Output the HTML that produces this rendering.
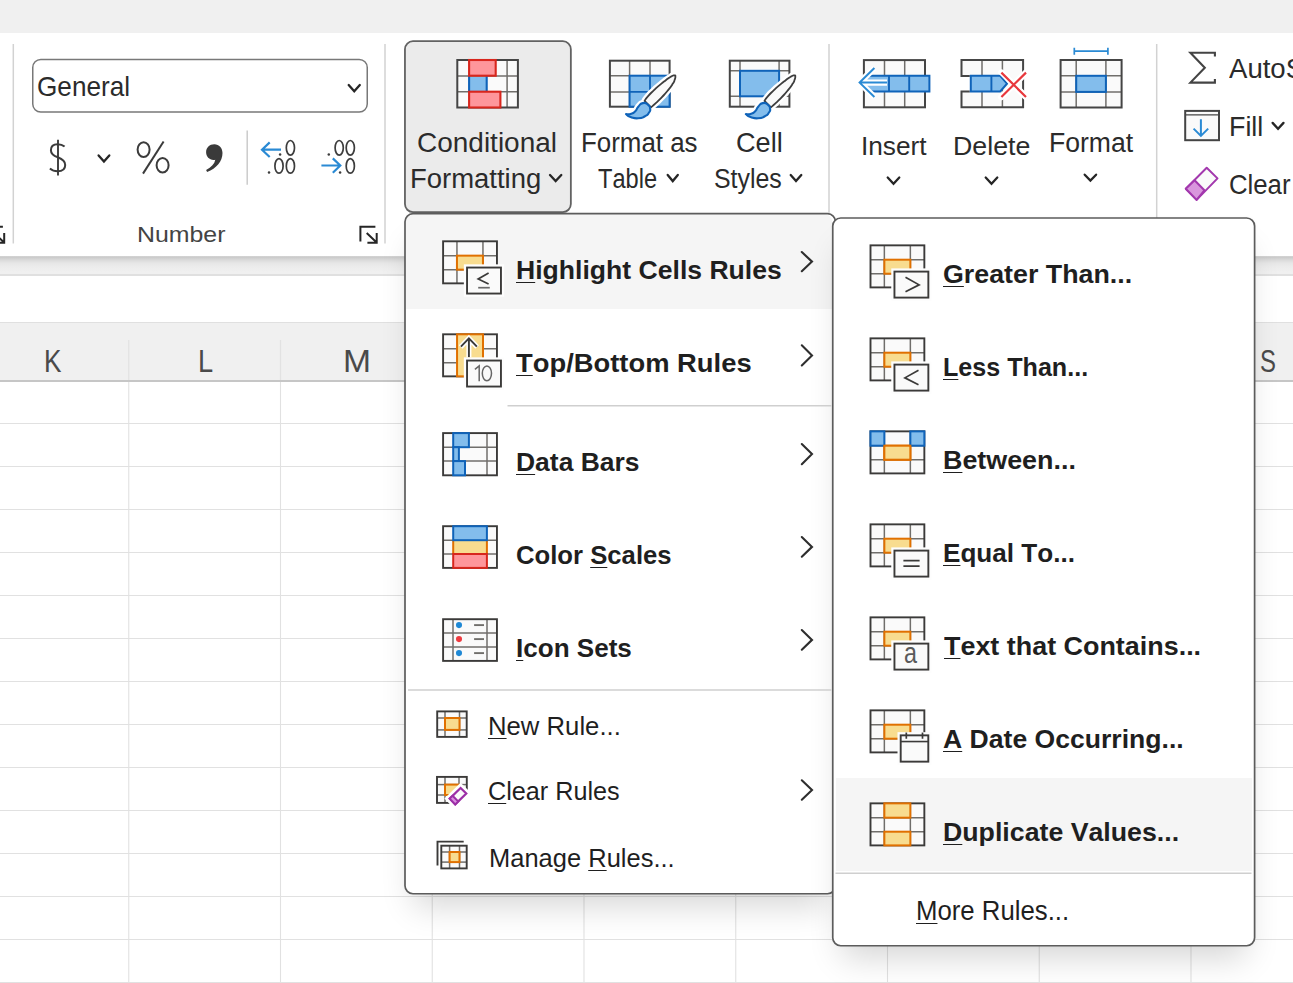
<!DOCTYPE html>
<html><head><meta charset="utf-8"><title>Excel - Conditional Formatting</title>
<style>
html,body{margin:0;padding:0;background:#fff;}
body{width:1293px;height:983px;overflow:hidden;position:relative;font-family:"Liberation Sans",sans-serif;}
#root{position:absolute;left:0;top:0;width:1293px;height:983px;overflow:hidden;background:#fff;}
.t{position:absolute;white-space:nowrap;line-height:1;transform-origin:0 0;font-kerning:none;font-family:"Liberation Sans",sans-serif;}
.t u{text-decoration:underline;text-decoration-thickness:1.3px;text-underline-offset:3px;text-decoration-skip-ink:none;}
.abs{position:absolute;}
svg.ov{position:absolute;left:0;top:0;width:1293px;height:983px;overflow:visible;}
.menu{position:absolute;background:#fff;border-radius:8px;box-shadow:0 21px 31px -9px rgba(0,0,0,0.165),0 0 5px rgba(0,0,0,0.03);}
</style></head><body><div id="root">
<div class="abs" style="left:0;top:0;width:1293px;height:32.5px;background:#f0f0f0"></div>
<div class="abs" style="left:0;top:256px;width:1293px;height:19px;background:linear-gradient(#d4d4d4 0px,#cccccc 1.5px,#dadada 4px,#e6e6e6 7px,#ececec 11px,#f0f0f0 16px)"></div>
<div class="abs" style="left:0;top:274.2px;width:1293px;height:1.7px;background:#e0e0e0"></div>
<div class="abs" style="left:0;top:322px;width:1293px;height:59px;background:#f0f0f0;border-top:1.8px solid #e0e0e0;box-sizing:border-box"></div>
<svg class="ov" viewBox="0 0 1293 983"><line x1="128.75" y1="340.00" x2="128.75" y2="380.50" stroke="#e2e2e2" stroke-width="1.2" /><line x1="128.75" y1="381.00" x2="128.75" y2="983.00" stroke="#e1e1e1" stroke-width="1.1" /><line x1="280.50" y1="340.00" x2="280.50" y2="380.50" stroke="#e2e2e2" stroke-width="1.2" /><line x1="280.50" y1="381.00" x2="280.50" y2="983.00" stroke="#e1e1e1" stroke-width="1.1" /><line x1="432.25" y1="340.00" x2="432.25" y2="380.50" stroke="#e2e2e2" stroke-width="1.2" /><line x1="432.25" y1="381.00" x2="432.25" y2="983.00" stroke="#e1e1e1" stroke-width="1.1" /><line x1="584.00" y1="340.00" x2="584.00" y2="380.50" stroke="#e2e2e2" stroke-width="1.2" /><line x1="584.00" y1="381.00" x2="584.00" y2="983.00" stroke="#e1e1e1" stroke-width="1.1" /><line x1="735.75" y1="340.00" x2="735.75" y2="380.50" stroke="#e2e2e2" stroke-width="1.2" /><line x1="735.75" y1="381.00" x2="735.75" y2="983.00" stroke="#e1e1e1" stroke-width="1.1" /><line x1="887.50" y1="340.00" x2="887.50" y2="380.50" stroke="#e2e2e2" stroke-width="1.2" /><line x1="887.50" y1="381.00" x2="887.50" y2="983.00" stroke="#e1e1e1" stroke-width="1.1" /><line x1="1039.25" y1="340.00" x2="1039.25" y2="380.50" stroke="#e2e2e2" stroke-width="1.2" /><line x1="1039.25" y1="381.00" x2="1039.25" y2="983.00" stroke="#e1e1e1" stroke-width="1.1" /><line x1="1191.00" y1="340.00" x2="1191.00" y2="380.50" stroke="#e2e2e2" stroke-width="1.2" /><line x1="1191.00" y1="381.00" x2="1191.00" y2="983.00" stroke="#e1e1e1" stroke-width="1.1" /><line x1="0.00" y1="423.50" x2="1293.00" y2="423.50" stroke="#e1e1e1" stroke-width="1.1" /><line x1="0.00" y1="466.50" x2="1293.00" y2="466.50" stroke="#e1e1e1" stroke-width="1.1" /><line x1="0.00" y1="509.50" x2="1293.00" y2="509.50" stroke="#e1e1e1" stroke-width="1.1" /><line x1="0.00" y1="552.50" x2="1293.00" y2="552.50" stroke="#e1e1e1" stroke-width="1.1" /><line x1="0.00" y1="595.50" x2="1293.00" y2="595.50" stroke="#e1e1e1" stroke-width="1.1" /><line x1="0.00" y1="638.50" x2="1293.00" y2="638.50" stroke="#e1e1e1" stroke-width="1.1" /><line x1="0.00" y1="681.50" x2="1293.00" y2="681.50" stroke="#e1e1e1" stroke-width="1.1" /><line x1="0.00" y1="724.50" x2="1293.00" y2="724.50" stroke="#e1e1e1" stroke-width="1.1" /><line x1="0.00" y1="767.50" x2="1293.00" y2="767.50" stroke="#e1e1e1" stroke-width="1.1" /><line x1="0.00" y1="810.50" x2="1293.00" y2="810.50" stroke="#e1e1e1" stroke-width="1.1" /><line x1="0.00" y1="853.50" x2="1293.00" y2="853.50" stroke="#e1e1e1" stroke-width="1.1" /><line x1="0.00" y1="896.50" x2="1293.00" y2="896.50" stroke="#e1e1e1" stroke-width="1.1" /><line x1="0.00" y1="939.50" x2="1293.00" y2="939.50" stroke="#e1e1e1" stroke-width="1.1" /><line x1="0.00" y1="982.50" x2="1293.00" y2="982.50" stroke="#e1e1e1" stroke-width="1.1" /><line x1="0.00" y1="381.00" x2="1293.00" y2="381.00" stroke="#c6c6c6" stroke-width="1.8" /><line x1="13.30" y1="44.00" x2="13.30" y2="243.50" stroke="#d2d2d2" stroke-width="1.5" /><line x1="385.00" y1="44.00" x2="385.00" y2="243.50" stroke="#d2d2d2" stroke-width="1.5" /><line x1="829.00" y1="44.00" x2="829.00" y2="243.50" stroke="#d2d2d2" stroke-width="1.5" /><line x1="1156.70" y1="44.00" x2="1156.70" y2="243.50" stroke="#d2d2d2" stroke-width="1.5" /><line x1="247.20" y1="130.50" x2="247.20" y2="184.70" stroke="#c8c8c8" stroke-width="1.4" /><rect x="32.75" y="59.5" width="334.5" height="52.5" rx="8" ry="8" fill="#fff" stroke="#787878" stroke-width="1.5"/><path d="M348.70 85.00 L354.25 91.30 L359.80 85.00" fill="none" stroke="#262626" stroke-width="2.3" stroke-linecap="round" stroke-linejoin="miter"/><path d="M98.60 155.40 L103.95 161.50 L109.30 155.40" fill="none" stroke="#262626" stroke-width="2.3" stroke-linecap="round" stroke-linejoin="miter"/><path d="M58 139.8 V175.6" fill="none" stroke="#3b3b3b" stroke-width="1.9"/><path d="M64.6 146.6 C62.6 144.9 60.2 144.2 57.6 144.2 C53.4 144.2 50.9 146.6 50.9 150.2 C50.9 154.2 53.8 155.8 57.8 157.3 C62.3 159 65.2 160.8 65.2 165 C65.2 169 62.2 171.3 57.6 171.3 C54.6 171.3 51.9 170.3 49.9 168.5" fill="none" stroke="#3b3b3b" stroke-width="2.0" stroke-linecap="butt"/><ellipse cx="143.6" cy="149.6" rx="6.0" ry="7.3" fill="none" stroke="#3b3b3b" stroke-width="2.0"/><ellipse cx="162.6" cy="165.3" rx="6.0" ry="7.3" fill="none" stroke="#3b3b3b" stroke-width="2.0"/><path d="M163.6 141.5 L143 173.6" fill="none" stroke="#3b3b3b" stroke-width="2.0"/><path d="M214.3 144.3 c4.8 0 8.2 3.5 8.2 8.8 c0 8.4 -6 15.4 -15.4 19 l-1 -2.2 c5.4 -2.8 8.4 -6.2 9.2 -10.2 c-0.6 0.15 -1.2 0.2 -1.8 0.2 c-4.3 0 -7.4 -3.2 -7.4 -7.6 c0 -4.5 3.4 -8 8.2 -8z" fill="#3a3a3a"/><circle cx="280.1" cy="154.4" r="1.25" fill="#3d3d3d"/><ellipse cx="290.4" cy="147.8" rx="4.1" ry="7.3" fill="none" stroke="#3d3d3d" stroke-width="1.7"/><circle cx="269" cy="172.4" r="1.25" fill="#3d3d3d"/><ellipse cx="279" cy="165.9" rx="4.1" ry="7.3" fill="none" stroke="#3d3d3d" stroke-width="1.7"/><ellipse cx="290.4" cy="165.9" rx="4.1" ry="7.3" fill="none" stroke="#3d3d3d" stroke-width="1.7"/><circle cx="328.8" cy="154.4" r="1.25" fill="#3d3d3d"/><ellipse cx="339.2" cy="147.8" rx="4.1" ry="7.3" fill="none" stroke="#3d3d3d" stroke-width="1.7"/><ellipse cx="350.3" cy="147.8" rx="4.1" ry="7.3" fill="none" stroke="#3d3d3d" stroke-width="1.7"/><circle cx="340.1" cy="172.4" r="1.25" fill="#3d3d3d"/><ellipse cx="350.3" cy="165.9" rx="4.1" ry="7.3" fill="none" stroke="#3d3d3d" stroke-width="1.7"/><path d="M262 149.7 H281 M269.7 142.4 L262 149.7 L269.7 157" fill="none" stroke="#2a8ad4" stroke-width="2.2" stroke-linecap="butt" stroke-linejoin="miter"/><path d="M321.4 165.5 H340 M332.8 158.4 L340.3 165.5 L332.8 172.8" fill="none" stroke="#2a8ad4" stroke-width="2.2" stroke-linecap="butt" stroke-linejoin="miter"/><path d="M360.4 241.4 V226.8 H375.4" fill="none" stroke="#262626" stroke-width="2"/><path d="M366.7 233.10000000000002 L376.4 242.3 M376.7 233.10000000000002 V242.8 H367.4" fill="none" stroke="#262626" stroke-width="2"/><path d="M-12.1 241.4 V226.8 H2.9000000000000004" fill="none" stroke="#262626" stroke-width="2"/><path d="M-5.8 233.10000000000002 L3.9000000000000004 242.3 M4.200000000000001 233.10000000000002 V242.8 H-5.1" fill="none" stroke="#262626" stroke-width="2"/><rect x="404.95" y="41.2" width="165.9" height="170.9" rx="8" ry="8" fill="#ebebeb" stroke="#626262" stroke-width="1.8"/><rect x="457.30" y="60.00" width="60.60" height="47.50" fill="#fafafa"/><line x1="507.10" y1="60.00" x2="507.10" y2="107.50" stroke="#706e6b" stroke-width="1.5"/><line x1="457.30" y1="75.90" x2="517.90" y2="75.90" stroke="#706e6b" stroke-width="1.5"/><line x1="457.30" y1="91.80" x2="517.90" y2="91.80" stroke="#706e6b" stroke-width="1.5"/><rect x="457.30" y="60.00" width="60.60" height="47.50" fill="none" stroke="#454545" stroke-width="2.0"/><rect x="469.10" y="77.00" width="17.60" height="14.00" fill="#83bdec" /><line x1="469.10" y1="76.00" x2="469.10" y2="92.00" stroke="#0f63b9" stroke-width="2.1" /><line x1="486.70" y1="76.00" x2="486.70" y2="92.00" stroke="#0f63b9" stroke-width="2.1" /><rect x="469.10" y="60.00" width="26.60" height="15.70" fill="#fe969b" stroke="#d8261d" stroke-width="2.1" /><rect x="469.10" y="91.70" width="31.30" height="15.80" fill="#fe969b" stroke="#d8261d" stroke-width="2.1" /><rect x="609.90" y="60.70" width="59.70" height="46.00" fill="#fafafa"/><line x1="629.60" y1="60.70" x2="629.60" y2="106.70" stroke="#706e6b" stroke-width="1.5"/><line x1="650.00" y1="60.70" x2="650.00" y2="106.70" stroke="#706e6b" stroke-width="1.5"/><line x1="609.90" y1="75.70" x2="669.60" y2="75.70" stroke="#706e6b" stroke-width="1.5"/><line x1="609.90" y1="91.90" x2="669.60" y2="91.90" stroke="#706e6b" stroke-width="1.5"/><rect x="609.90" y="60.70" width="59.70" height="46.00" fill="none" stroke="#454545" stroke-width="2.0"/><rect x="629.60" y="75.70" width="40.00" height="31.00" fill="#83bdec" stroke="#0f63b9" stroke-width="2.0" /><line x1="650.00" y1="75.70" x2="650.00" y2="106.70" stroke="#0f63b9" stroke-width="1.9" /><line x1="629.60" y1="91.90" x2="669.60" y2="91.90" stroke="#0f63b9" stroke-width="1.9" /><path d="M644.60 100.80 C645.77 99.23 644.97 99.63 648.10 96.10 C651.23 92.57 650.07 93.93 654.00 90.20 C657.93 86.47 655.97 88.23 659.90 84.90 C663.83 81.57 662.10 82.97 665.80 80.20 C669.50 77.43 668.17 78.20 671.00 76.60 C673.83 75.00 672.83 75.40 674.30 75.40 C675.77 75.40 675.30 75.07 675.40 76.60 C675.50 78.13 675.43 77.67 674.60 80.00 C673.77 82.33 675.23 80.00 672.90 83.60 C670.57 87.20 671.33 86.23 667.60 90.80 C663.87 95.37 665.63 93.17 661.70 97.30 C657.77 101.43 659.37 99.87 655.80 103.20 C652.23 106.53 652.60 105.93 651.00 107.30z" fill="#fff" stroke="#fff" stroke-width="6.5" stroke-linejoin="round"/><path d="M626.00 114.10 C627.53 114.03 627.50 114.87 630.60 113.90 C633.70 112.93 632.73 113.60 635.30 111.20 C637.87 108.80 635.80 109.40 638.30 106.70 C640.80 104.00 639.60 103.80 642.80 103.10 C646.00 102.40 645.47 102.80 647.90 104.60 C650.33 106.40 649.73 105.87 650.10 108.50 C650.47 111.13 650.70 109.93 649.00 112.50 C647.30 115.07 648.63 114.27 645.00 116.20 C641.37 118.13 642.90 118.07 638.10 118.30 C633.30 118.53 634.63 118.30 630.60 116.90 C626.57 115.50 627.53 115.03 626.00 114.10z" fill="#fff" stroke="#fff" stroke-width="6.5" stroke-linejoin="round"/><path d="M644.60 100.80 C645.77 99.23 644.97 99.63 648.10 96.10 C651.23 92.57 650.07 93.93 654.00 90.20 C657.93 86.47 655.97 88.23 659.90 84.90 C663.83 81.57 662.10 82.97 665.80 80.20 C669.50 77.43 668.17 78.20 671.00 76.60 C673.83 75.00 672.83 75.40 674.30 75.40 C675.77 75.40 675.30 75.07 675.40 76.60 C675.50 78.13 675.43 77.67 674.60 80.00 C673.77 82.33 675.23 80.00 672.90 83.60 C670.57 87.20 671.33 86.23 667.60 90.80 C663.87 95.37 665.63 93.17 661.70 97.30 C657.77 101.43 659.37 99.87 655.80 103.20 C652.23 106.53 652.60 105.93 651.00 107.30z" fill="#fafafa" stroke="#3d3d3d" stroke-width="1.8" stroke-linejoin="round"/><path d="M626.00 114.10 C627.53 114.03 627.50 114.87 630.60 113.90 C633.70 112.93 632.73 113.60 635.30 111.20 C637.87 108.80 635.80 109.40 638.30 106.70 C640.80 104.00 639.60 103.80 642.80 103.10 C646.00 102.40 645.47 102.80 647.90 104.60 C650.33 106.40 649.73 105.87 650.10 108.50 C650.47 111.13 650.70 109.93 649.00 112.50 C647.30 115.07 648.63 114.27 645.00 116.20 C641.37 118.13 642.90 118.07 638.10 118.30 C633.30 118.53 634.63 118.30 630.60 116.90 C626.57 115.50 627.53 115.03 626.00 114.10z" fill="#83bdec" stroke="#0f63b9" stroke-width="2.1" stroke-linejoin="round"/><rect x="729.80" y="60.70" width="59.60" height="46.00" fill="#fafafa"/><line x1="740.00" y1="60.70" x2="740.00" y2="106.70" stroke="#706e6b" stroke-width="1.5"/><line x1="779.10" y1="60.70" x2="779.10" y2="106.70" stroke="#706e6b" stroke-width="1.5"/><line x1="729.80" y1="70.80" x2="789.40" y2="70.80" stroke="#706e6b" stroke-width="1.5"/><line x1="729.80" y1="96.30" x2="789.40" y2="96.30" stroke="#706e6b" stroke-width="1.5"/><rect x="729.80" y="60.70" width="59.60" height="46.00" fill="none" stroke="#454545" stroke-width="2.0"/><rect x="740.00" y="70.80" width="39.10" height="25.50" fill="#83bdec" stroke="#0f63b9" stroke-width="2.0" /><path d="M764.50 100.80 C765.67 99.23 764.87 99.63 768.00 96.10 C771.13 92.57 769.97 93.93 773.90 90.20 C777.83 86.47 775.87 88.23 779.80 84.90 C783.73 81.57 782.00 82.97 785.70 80.20 C789.40 77.43 788.07 78.20 790.90 76.60 C793.73 75.00 792.73 75.40 794.20 75.40 C795.67 75.40 795.20 75.07 795.30 76.60 C795.40 78.13 795.33 77.67 794.50 80.00 C793.67 82.33 795.13 80.00 792.80 83.60 C790.47 87.20 791.23 86.23 787.50 90.80 C783.77 95.37 785.53 93.17 781.60 97.30 C777.67 101.43 779.27 99.87 775.70 103.20 C772.13 106.53 772.50 105.93 770.90 107.30z" fill="#fff" stroke="#fff" stroke-width="6.5" stroke-linejoin="round"/><path d="M745.90 114.10 C747.43 114.03 747.40 114.87 750.50 113.90 C753.60 112.93 752.63 113.60 755.20 111.20 C757.77 108.80 755.70 109.40 758.20 106.70 C760.70 104.00 759.50 103.80 762.70 103.10 C765.90 102.40 765.37 102.80 767.80 104.60 C770.23 106.40 769.63 105.87 770.00 108.50 C770.37 111.13 770.60 109.93 768.90 112.50 C767.20 115.07 768.53 114.27 764.90 116.20 C761.27 118.13 762.80 118.07 758.00 118.30 C753.20 118.53 754.53 118.30 750.50 116.90 C746.47 115.50 747.43 115.03 745.90 114.10z" fill="#fff" stroke="#fff" stroke-width="6.5" stroke-linejoin="round"/><path d="M764.50 100.80 C765.67 99.23 764.87 99.63 768.00 96.10 C771.13 92.57 769.97 93.93 773.90 90.20 C777.83 86.47 775.87 88.23 779.80 84.90 C783.73 81.57 782.00 82.97 785.70 80.20 C789.40 77.43 788.07 78.20 790.90 76.60 C793.73 75.00 792.73 75.40 794.20 75.40 C795.67 75.40 795.20 75.07 795.30 76.60 C795.40 78.13 795.33 77.67 794.50 80.00 C793.67 82.33 795.13 80.00 792.80 83.60 C790.47 87.20 791.23 86.23 787.50 90.80 C783.77 95.37 785.53 93.17 781.60 97.30 C777.67 101.43 779.27 99.87 775.70 103.20 C772.13 106.53 772.50 105.93 770.90 107.30z" fill="#fafafa" stroke="#3d3d3d" stroke-width="1.8" stroke-linejoin="round"/><path d="M745.90 114.10 C747.43 114.03 747.40 114.87 750.50 113.90 C753.60 112.93 752.63 113.60 755.20 111.20 C757.77 108.80 755.70 109.40 758.20 106.70 C760.70 104.00 759.50 103.80 762.70 103.10 C765.90 102.40 765.37 102.80 767.80 104.60 C770.23 106.40 769.63 105.87 770.00 108.50 C770.37 111.13 770.60 109.93 768.90 112.50 C767.20 115.07 768.53 114.27 764.90 116.20 C761.27 118.13 762.80 118.07 758.00 118.30 C753.20 118.53 754.53 118.30 750.50 116.90 C746.47 115.50 747.43 115.03 745.90 114.10z" fill="#83bdec" stroke="#0f63b9" stroke-width="2.1" stroke-linejoin="round"/><rect x="863.90" y="60.10" width="61.10" height="47.20" fill="#fafafa"/><line x1="884.50" y1="60.10" x2="884.50" y2="107.30" stroke="#706e6b" stroke-width="1.5"/><line x1="904.70" y1="60.10" x2="904.70" y2="107.30" stroke="#706e6b" stroke-width="1.5"/><rect x="863.90" y="60.10" width="61.10" height="47.20" fill="none" stroke="#454545" stroke-width="2.0"/><path d="M929.4 75.8 H866.4 L861 82.6 L866.4 91.5 H929.4z" fill="#83bdec" stroke="none"/><path d="M868 75.8 H929.4 V91.5 H868" fill="none" stroke="#0f63b9" stroke-width="2.0"/><line x1="889.00" y1="75.80" x2="889.00" y2="91.50" stroke="#0f63b9" stroke-width="1.9" /><line x1="909.20" y1="75.80" x2="909.20" y2="91.50" stroke="#0f63b9" stroke-width="1.9" /><path d="M874.2 68.2 L859.6 82.6 L874.2 96.8 M859.6 82.6 H887" fill="none" stroke="#fff" stroke-width="6.2" stroke-linecap="butt" stroke-linejoin="miter"/><path d="M874.4 68 L859.6 82.6 L874.4 97 M860.5 82.6 H887" fill="none" stroke="#2a8ad4" stroke-width="2.0" stroke-linecap="butt" stroke-linejoin="miter"/><rect x="961.50" y="60.10" width="61.60" height="47.20" fill="#fafafa" /><line x1="982.00" y1="60.10" x2="982.00" y2="107.30" stroke="#706e6b" stroke-width="1.5" /><line x1="1002.40" y1="60.10" x2="1002.40" y2="107.30" stroke="#706e6b" stroke-width="1.5" /><rect x="955.00" y="77.00" width="14.80" height="13.40" fill="#fff" /><path d="M969.8 76 H961.5 V60.1 H1023.1 V107.3 H961.5 V91.4 H969.8" fill="none" stroke="#454545" stroke-width="2.0"/><path d="M1001.4 72.6 L1026 97 M1026 72.6 L1001.4 97" fill="none" stroke="#fff" stroke-width="6.5" stroke-linecap="round"/><path d="M970.8 75.8 H1000.2 L1007 83.65 L1000.2 91.5 H970.8z" fill="#83bdec" stroke="#0f63b9" stroke-width="2.0" stroke-linejoin="miter"/><line x1="991.40" y1="75.80" x2="991.40" y2="91.50" stroke="#0f63b9" stroke-width="1.9" /><path d="M1009.5 80.6 L1026 97 M1026 72.6 L1001.4 97 M1001.4 72.6 L1009.5 80.6" fill="none" stroke="#fff" stroke-width="5.5" stroke-linecap="round"/><path d="M1001.4 72.6 L1026 97 M1026 72.6 L1001.4 97" fill="none" stroke="#e8383d" stroke-width="2.2" stroke-linecap="butt"/><rect x="1060.60" y="60.00" width="61.00" height="47.50" fill="#fafafa"/><line x1="1076.20" y1="60.00" x2="1076.20" y2="107.50" stroke="#706e6b" stroke-width="1.5"/><line x1="1105.90" y1="60.00" x2="1105.90" y2="107.50" stroke="#706e6b" stroke-width="1.5"/><line x1="1060.60" y1="75.80" x2="1121.60" y2="75.80" stroke="#706e6b" stroke-width="1.5"/><line x1="1060.60" y1="91.90" x2="1121.60" y2="91.90" stroke="#706e6b" stroke-width="1.5"/><rect x="1060.60" y="60.00" width="61.00" height="47.50" fill="none" stroke="#454545" stroke-width="2.0"/><rect x="1076.20" y="75.80" width="29.70" height="16.10" fill="#83bdec" stroke="#0f63b9" stroke-width="2.0" /><path d="M1073.7 51.2 H1108.5 M1074.3 47.8 V54.7 M1107.9 47.8 V54.7" fill="none" stroke="#2a8ad4" stroke-width="1.7"/><path d="M1214.9 56.6 V52.7 H1190.4 L1204.8 67.7 L1190.4 82.6 H1214.9 V78.9" fill="none" stroke="#444" stroke-width="2.1" stroke-linejoin="miter"/><rect x="1185.20" y="110.90" width="33.80" height="29.30" fill="#fafafa" stroke="#444" stroke-width="2.0" /><line x1="1185.20" y1="114.90" x2="1219.00" y2="114.90" stroke="#444" stroke-width="1.2" /><path d="M1200.9 119.3 V135.5 M1193.6 128.6 L1200.9 135.9 L1208.2 128.6" fill="none" stroke="#2a8ad4" stroke-width="2.0" stroke-linecap="butt" stroke-linejoin="miter"/><path d="M1206.7 167.8 L1217.5 178.4 L1196.6 199.9 L1185.8 188.7z" fill="#fafafa" stroke="#a338ae" stroke-width="2.0" stroke-linejoin="round"/><path d="M1194.6 180.3 L1204.4 190.3 L1196.6 199.9 L1185.8 188.7z" fill="#d996dd" stroke="#a338ae" stroke-width="2.0" stroke-linejoin="round"/><path d="M550.00 175.00 L555.65 181.10 L561.30 175.00" fill="none" stroke="#262626" stroke-width="2.3" stroke-linecap="round" stroke-linejoin="miter"/><path d="M667.70 175.00 L672.75 181.10 L677.80 175.00" fill="none" stroke="#262626" stroke-width="2.3" stroke-linecap="round" stroke-linejoin="miter"/><path d="M790.70 175.00 L796.00 181.10 L801.30 175.00" fill="none" stroke="#262626" stroke-width="2.3" stroke-linecap="round" stroke-linejoin="miter"/><path d="M887.70 177.50 L893.50 183.70 L899.30 177.50" fill="none" stroke="#262626" stroke-width="2.3" stroke-linecap="round" stroke-linejoin="miter"/><path d="M985.70 177.50 L991.50 183.70 L997.30 177.50" fill="none" stroke="#262626" stroke-width="2.3" stroke-linecap="round" stroke-linejoin="miter"/><path d="M1084.70 174.70 L1090.40 180.60 L1096.10 174.70" fill="none" stroke="#262626" stroke-width="2.3" stroke-linecap="round" stroke-linejoin="miter"/><path d="M1272.60 122.90 L1278.05 128.80 L1283.50 122.90" fill="none" stroke="#262626" stroke-width="2.3" stroke-linecap="round" stroke-linejoin="miter"/></svg>
<span class="t" style="left:36.68px;top:73.81px;font-size:26.89px;transform:scaleX(0.9728);color:#2b2b2b;">General</span>
<span class="t" style="left:136.96px;top:222.52px;font-size:22.97px;transform:scaleX(1.0829);color:#444;">Number</span>
<span class="t" style="left:417.33px;top:130.13px;font-size:26.74px;transform:scaleX(1.0466);color:#2b2b2b;">Conditional</span>
<span class="t" style="left:409.50px;top:165.63px;font-size:26.74px;transform:scaleX(1.0270);color:#2b2b2b;">Formatting</span>
<span class="t" style="left:581.38px;top:130.13px;font-size:26.74px;transform:scaleX(0.9683);color:#2b2b2b;">Format as</span>
<span class="t" style="left:597.97px;top:165.63px;font-size:26.74px;transform:scaleX(0.8831);color:#2b2b2b;">Table</span>
<span class="t" style="left:735.62px;top:130.13px;font-size:26.74px;transform:scaleX(1.0134);color:#2b2b2b;">Cell</span>
<span class="t" style="left:713.62px;top:165.63px;font-size:26.74px;transform:scaleX(0.9307);color:#2b2b2b;">Styles</span>
<span class="t" style="left:860.58px;top:133.27px;font-size:26.45px;transform:scaleX(0.9917);color:#2b2b2b;">Insert</span>
<span class="t" style="left:953.30px;top:133.27px;font-size:26.45px;transform:scaleX(1.0120);color:#2b2b2b;">Delete</span>
<span class="t" style="left:1049.02px;top:130.13px;font-size:26.74px;transform:scaleX(0.9938);color:#2b2b2b;">Format</span>
<span class="t" style="left:1229.35px;top:56.23px;font-size:26.74px;transform:scaleX(1.0308);color:#2b2b2b;">AutoSum</span>
<span class="t" style="left:1228.60px;top:113.93px;font-size:26.74px;transform:scaleX(1.0040);color:#2b2b2b;">Fill</span>
<span class="t" style="left:1228.89px;top:172.03px;font-size:26.74px;transform:scaleX(0.9628);color:#2b2b2b;">Clear</span>
<span class="t" style="left:43.61px;top:345.87px;font-size:31.25px;transform:scaleX(0.8366);color:#4a4a4a;">K</span>
<span class="t" style="left:197.77px;top:345.87px;font-size:31.25px;transform:scaleX(0.8709);color:#4a4a4a;">L</span>
<span class="t" style="left:342.74px;top:345.87px;font-size:31.25px;transform:scaleX(1.0763);color:#4a4a4a;">M</span>
<span class="t" style="left:1260.42px;top:345.87px;font-size:31.25px;transform:scaleX(0.7643);color:#4a4a4a;">S</span>
<div class="menu" style="left:405.00px;top:213.70px;width:430.50px;height:680.05px"></div>
<div class="abs" style="left:405.6px;top:214.3px;width:426.4px;height:95.2px;background:#f5f5f5;border-radius:7.5px 7.5px 0 0"></div>
<svg class="ov" viewBox="0 0 1293 983"><rect x="405.00" y="213.70" width="430.50" height="680.05" rx="8" ry="8" fill="none" stroke="#5c5c5c" stroke-width="1.7"/></svg>
<div class="menu" style="left:832.75px;top:218.00px;width:421.85px;height:727.75px"></div>
<div class="abs" style="left:835.5px;top:778px;width:416px;height:93.3px;background:#f5f5f5"></div>
<svg class="ov" viewBox="0 0 1293 983"><rect x="832.75" y="218.00" width="421.85" height="727.75" rx="8" ry="8" fill="none" stroke="#5c5c5c" stroke-width="1.7"/></svg>
<svg class="ov" viewBox="0 0 1293 983"><line x1="507.50" y1="405.75" x2="831.50" y2="405.75" stroke="#cfcfcf" stroke-width="1.5" /><line x1="408.00" y1="690.00" x2="831.50" y2="690.00" stroke="#cfcfcf" stroke-width="1.5" /><line x1="835.50" y1="873.25" x2="1251.50" y2="873.25" stroke="#cfcfcf" stroke-width="1.5" /><path d="M801.80 252.05 L812.00 261.62 L801.80 271.20" fill="none" stroke="#2e2e2e" stroke-width="2.1" stroke-linecap="round" stroke-linejoin="miter"/><path d="M801.80 345.30 L812.00 355.38 L801.80 365.45" fill="none" stroke="#2e2e2e" stroke-width="2.1" stroke-linecap="round" stroke-linejoin="miter"/><path d="M801.80 444.05 L812.00 454.12 L801.80 464.20" fill="none" stroke="#2e2e2e" stroke-width="2.1" stroke-linecap="round" stroke-linejoin="miter"/><path d="M801.80 537.05 L812.00 546.88 L801.80 556.70" fill="none" stroke="#2e2e2e" stroke-width="2.1" stroke-linecap="round" stroke-linejoin="miter"/><path d="M801.80 630.05 L812.00 639.88 L801.80 649.70" fill="none" stroke="#2e2e2e" stroke-width="2.1" stroke-linecap="round" stroke-linejoin="miter"/><path d="M801.80 780.30 L812.00 790.00 L801.80 799.70" fill="none" stroke="#2e2e2e" stroke-width="2.1" stroke-linecap="round" stroke-linejoin="miter"/><rect x="443.10" y="241.30" width="53.85" height="42.05" fill="#fafafa"/><line x1="456.95" y1="241.30" x2="456.95" y2="283.35" stroke="#706e6b" stroke-width="1.5"/><line x1="482.95" y1="241.30" x2="482.95" y2="283.35" stroke="#706e6b" stroke-width="1.5"/><line x1="443.10" y1="255.65" x2="496.95" y2="255.65" stroke="#706e6b" stroke-width="1.5"/><line x1="443.10" y1="269.65" x2="496.95" y2="269.65" stroke="#706e6b" stroke-width="1.5"/><rect x="443.10" y="241.30" width="53.85" height="42.05" fill="none" stroke="#3b3a39" stroke-width="1.9"/><rect x="456.95" y="255.65" width="26.00" height="14.00" fill="#f8dc8f" stroke="#e07000" stroke-width="2.0" /><rect x="467.05" y="267.55" width="33.90" height="26.00" fill="#fdfdfd" stroke="#fdfdfd" stroke-width="6.4" /><rect x="467.05" y="267.55" width="33.90" height="26.00" fill="#fafafa" stroke="#3b3a39" stroke-width="1.9" /><path d="M488.6 273 L478.2 278.9 L488.6 284" fill="none" stroke="#3b3a39" stroke-width="1.7" stroke-linejoin="miter"/><line x1="478.20" y1="287.70" x2="489.80" y2="287.70" stroke="#6a6a6a" stroke-width="1.7" /><rect x="443.10" y="334.30" width="53.85" height="42.05" fill="#fafafa"/><line x1="443.10" y1="348.65" x2="496.95" y2="348.65" stroke="#706e6b" stroke-width="1.5"/><line x1="443.10" y1="362.65" x2="496.95" y2="362.65" stroke="#706e6b" stroke-width="1.5"/><rect x="443.10" y="334.30" width="53.85" height="42.05" fill="none" stroke="#3b3a39" stroke-width="1.9"/><rect x="457.05" y="334.30" width="25.95" height="42.05" fill="#f8dc8f" stroke="#e07000" stroke-width="2.0" /><path d="M468.9 357.2 V338 M460.7 346.9 L468.9 338.3 L477.1 346.9" fill="none" stroke="#fff" stroke-width="5" stroke-linejoin="miter" stroke-linecap="butt"/><path d="M468.9 357.2 V338 M460.9 346.7 L468.9 338.3 L476.9 346.7" fill="none" stroke="#3b3a39" stroke-width="1.9" stroke-linejoin="miter"/><rect x="467.05" y="360.55" width="33.90" height="26.00" fill="#fdfdfd" stroke="#fdfdfd" stroke-width="6.4" /><rect x="467.05" y="360.55" width="33.90" height="26.00" fill="#fafafa" stroke="#3b3a39" stroke-width="1.9" /><path d="M474.9 369.3 L479.2 365.9 V381.3" fill="none" stroke="#666" stroke-width="1.5" stroke-linejoin="miter"/><ellipse cx="486.9" cy="373.3" rx="4.6" ry="7.4" fill="none" stroke="#666" stroke-width="1.5"/><rect x="443.10" y="433.10" width="53.85" height="42.20" fill="#fafafa"/><line x1="487.00" y1="433.10" x2="487.00" y2="475.30" stroke="#706e6b" stroke-width="1.5"/><line x1="443.10" y1="447.20" x2="496.95" y2="447.20" stroke="#706e6b" stroke-width="1.5"/><line x1="443.10" y1="461.10" x2="496.95" y2="461.10" stroke="#706e6b" stroke-width="1.5"/><rect x="443.10" y="433.10" width="53.85" height="42.20" fill="none" stroke="#3b3a39" stroke-width="1.9"/><rect x="453.20" y="433.10" width="15.70" height="14.10" fill="#83bdec" stroke="#0f63b9" stroke-width="2.0" /><rect x="453.20" y="447.20" width="5.70" height="13.90" fill="#83bdec" stroke="#0f63b9" stroke-width="2.0" /><rect x="453.20" y="461.10" width="11.80" height="14.20" fill="#83bdec" stroke="#0f63b9" stroke-width="2.0" /><rect x="443.10" y="526.20" width="53.85" height="41.70" fill="#fafafa"/><line x1="443.10" y1="540.20" x2="496.95" y2="540.20" stroke="#706e6b" stroke-width="1.5"/><line x1="443.10" y1="554.00" x2="496.95" y2="554.00" stroke="#706e6b" stroke-width="1.5"/><rect x="443.10" y="526.20" width="53.85" height="41.70" fill="none" stroke="#3b3a39" stroke-width="1.9"/><rect x="453.20" y="540.20" width="33.70" height="13.80" fill="#f8dc8f" /><line x1="453.20" y1="540.20" x2="453.20" y2="554.00" stroke="#e07000" stroke-width="2.0" /><line x1="486.90" y1="540.20" x2="486.90" y2="554.00" stroke="#e07000" stroke-width="2.0" /><rect x="453.20" y="526.20" width="33.70" height="14.00" fill="#83bdec" stroke="#0f63b9" stroke-width="2.0" /><rect x="453.20" y="554.00" width="33.70" height="13.90" fill="#fe969b" stroke="#d8261d" stroke-width="2.0" /><rect x="443.10" y="619.20" width="53.85" height="41.70" fill="#fafafa"/><line x1="453.00" y1="619.20" x2="453.00" y2="660.90" stroke="#706e6b" stroke-width="1.5"/><line x1="487.00" y1="619.20" x2="487.00" y2="660.90" stroke="#706e6b" stroke-width="1.5"/><line x1="443.10" y1="633.00" x2="496.95" y2="633.00" stroke="#706e6b" stroke-width="1.5"/><line x1="443.10" y1="646.90" x2="496.95" y2="646.90" stroke="#706e6b" stroke-width="1.5"/><rect x="443.10" y="619.20" width="53.85" height="41.70" fill="none" stroke="#3b3a39" stroke-width="1.9"/><circle cx="459" cy="625.10" r="3.05" fill="#1e88d5"/><line x1="474.10" y1="625.10" x2="484.00" y2="625.10" stroke="#706e6b" stroke-width="1.9" /><circle cx="459" cy="639.10" r="3.05" fill="#ee3a3f"/><line x1="474.10" y1="639.10" x2="484.00" y2="639.10" stroke="#706e6b" stroke-width="1.9" /><circle cx="459" cy="653.10" r="3.05" fill="#1e88d5"/><line x1="474.10" y1="653.10" x2="484.00" y2="653.10" stroke="#706e6b" stroke-width="1.9" /><rect x="437.20" y="711.40" width="29.50" height="25.50" fill="#fafafa"/><line x1="445.00" y1="711.40" x2="445.00" y2="736.90" stroke="#706e6b" stroke-width="1.5"/><line x1="459.50" y1="711.40" x2="459.50" y2="736.90" stroke="#706e6b" stroke-width="1.5"/><line x1="437.20" y1="718.00" x2="466.70" y2="718.00" stroke="#706e6b" stroke-width="1.5"/><line x1="437.20" y1="729.90" x2="466.70" y2="729.90" stroke="#706e6b" stroke-width="1.5"/><rect x="437.20" y="711.40" width="29.50" height="25.50" fill="none" stroke="#3b3a39" stroke-width="1.9"/><rect x="445.00" y="718.00" width="14.50" height="11.90" fill="#f8dc8f" stroke="#e07000" stroke-width="2.0" /><rect x="437.00" y="776.90" width="29.80" height="26.00" fill="#fafafa"/><line x1="445.00" y1="776.90" x2="445.00" y2="802.90" stroke="#706e6b" stroke-width="1.5"/><line x1="459.00" y1="776.90" x2="459.00" y2="802.90" stroke="#706e6b" stroke-width="1.5"/><line x1="437.00" y1="784.60" x2="466.80" y2="784.60" stroke="#706e6b" stroke-width="1.5"/><line x1="437.00" y1="795.00" x2="466.80" y2="795.00" stroke="#706e6b" stroke-width="1.5"/><rect x="437.00" y="776.90" width="29.80" height="26.00" fill="none" stroke="#3b3a39" stroke-width="1.9"/><rect x="445.00" y="784.60" width="14.00" height="10.40" fill="#f8dc8f" stroke="#e07000" stroke-width="2.0" /><path d="M469 795 V806 H456.5z" fill="#fff"/><path d="M460.6 788 L466.3 793.5 L455.2 804.4 L449.7 798.6z" fill="#fff" stroke="#fff" stroke-width="7.5" stroke-linejoin="miter"/><path d="M460.6 788 L466.3 793.5 L455.2 804.4 L449.7 798.6z" fill="#fafafa" stroke="#9c2fa6" stroke-width="2.2" stroke-linejoin="miter"/><path d="M452.6 795.8 L458.2 801.4 L455.2 804.4 L449.7 798.6z" fill="#d98fe0" stroke="#9c2fa6" stroke-width="2.0" stroke-linejoin="miter"/><path d="M437.5 865.4 V841.6 H463.7" fill="none" stroke="#3b3a39" stroke-width="1.9"/><rect x="441.30" y="845.70" width="25.40" height="22.70" fill="#fafafa"/><line x1="449.60" y1="845.70" x2="449.60" y2="868.40" stroke="#706e6b" stroke-width="1.5"/><line x1="459.50" y1="845.70" x2="459.50" y2="868.40" stroke="#706e6b" stroke-width="1.5"/><line x1="441.30" y1="852.00" x2="466.70" y2="852.00" stroke="#706e6b" stroke-width="1.5"/><line x1="441.30" y1="862.10" x2="466.70" y2="862.10" stroke="#706e6b" stroke-width="1.5"/><rect x="441.30" y="845.70" width="25.40" height="22.70" fill="none" stroke="#3b3a39" stroke-width="1.9"/><rect x="449.60" y="852.00" width="9.90" height="10.10" fill="#f8dc8f" stroke="#e07000" stroke-width="2.0" /><rect x="870.50" y="245.35" width="53.85" height="42.05" fill="#fafafa"/><line x1="884.35" y1="245.35" x2="884.35" y2="287.40" stroke="#706e6b" stroke-width="1.5"/><line x1="910.35" y1="245.35" x2="910.35" y2="287.40" stroke="#706e6b" stroke-width="1.5"/><line x1="870.50" y1="259.70" x2="924.35" y2="259.70" stroke="#706e6b" stroke-width="1.5"/><line x1="870.50" y1="273.70" x2="924.35" y2="273.70" stroke="#706e6b" stroke-width="1.5"/><rect x="870.50" y="245.35" width="53.85" height="42.05" fill="none" stroke="#3b3a39" stroke-width="1.9"/><rect x="884.35" y="259.70" width="26.00" height="14.00" fill="#f8dc8f" stroke="#e07000" stroke-width="2.0" /><rect x="894.45" y="271.60" width="33.90" height="26.00" fill="#fdfdfd" stroke="#fdfdfd" stroke-width="6.4" /><rect x="894.45" y="271.60" width="33.90" height="26.00" fill="#fafafa" stroke="#3b3a39" stroke-width="1.9" /><path d="M905.5 277.35 L919.1 284.85 L905.5 291.65" fill="none" stroke="#3b3a39" stroke-width="1.7" stroke-linejoin="miter"/><rect x="870.50" y="338.35" width="53.85" height="42.05" fill="#fafafa"/><line x1="884.35" y1="338.35" x2="884.35" y2="380.40" stroke="#706e6b" stroke-width="1.5"/><line x1="910.35" y1="338.35" x2="910.35" y2="380.40" stroke="#706e6b" stroke-width="1.5"/><line x1="870.50" y1="352.70" x2="924.35" y2="352.70" stroke="#706e6b" stroke-width="1.5"/><line x1="870.50" y1="366.70" x2="924.35" y2="366.70" stroke="#706e6b" stroke-width="1.5"/><rect x="870.50" y="338.35" width="53.85" height="42.05" fill="none" stroke="#3b3a39" stroke-width="1.9"/><rect x="884.35" y="352.70" width="26.00" height="14.00" fill="#f8dc8f" stroke="#e07000" stroke-width="2.0" /><rect x="894.45" y="364.60" width="33.90" height="26.00" fill="#fdfdfd" stroke="#fdfdfd" stroke-width="6.4" /><rect x="894.45" y="364.60" width="33.90" height="26.00" fill="#fafafa" stroke="#3b3a39" stroke-width="1.9" /><path d="M918.5 370.35 L904.9 377.85 L918.5 384.65000000000003" fill="none" stroke="#3b3a39" stroke-width="1.7" stroke-linejoin="miter"/><rect x="870.50" y="431.35" width="53.85" height="42.05" fill="#fafafa"/><line x1="884.35" y1="431.35" x2="884.35" y2="473.40" stroke="#706e6b" stroke-width="1.5"/><line x1="910.35" y1="431.35" x2="910.35" y2="473.40" stroke="#706e6b" stroke-width="1.5"/><line x1="870.50" y1="445.70" x2="924.35" y2="445.70" stroke="#706e6b" stroke-width="1.5"/><line x1="870.50" y1="459.70" x2="924.35" y2="459.70" stroke="#706e6b" stroke-width="1.5"/><rect x="870.50" y="431.35" width="53.85" height="42.05" fill="none" stroke="#3b3a39" stroke-width="1.9"/><rect x="884.35" y="445.70" width="26.00" height="14.00" fill="#f8dc8f" stroke="#e07000" stroke-width="2.0" /><rect x="870.50" y="431.35" width="13.85" height="14.35" fill="#83bdec" stroke="#0f63b9" stroke-width="2.0" /><rect x="910.35" y="431.35" width="14.00" height="14.35" fill="#83bdec" stroke="#0f63b9" stroke-width="2.0" /><rect x="884.35" y="445.70" width="26.00" height="14.00" fill="#f8dc8f" stroke="#e07000" stroke-width="2.0" /><rect x="870.50" y="524.35" width="53.85" height="42.05" fill="#fafafa"/><line x1="884.35" y1="524.35" x2="884.35" y2="566.40" stroke="#706e6b" stroke-width="1.5"/><line x1="910.35" y1="524.35" x2="910.35" y2="566.40" stroke="#706e6b" stroke-width="1.5"/><line x1="870.50" y1="538.70" x2="924.35" y2="538.70" stroke="#706e6b" stroke-width="1.5"/><line x1="870.50" y1="552.70" x2="924.35" y2="552.70" stroke="#706e6b" stroke-width="1.5"/><rect x="870.50" y="524.35" width="53.85" height="42.05" fill="none" stroke="#3b3a39" stroke-width="1.9"/><rect x="884.35" y="538.70" width="26.00" height="14.00" fill="#f8dc8f" stroke="#e07000" stroke-width="2.0" /><rect x="894.45" y="550.60" width="33.90" height="26.00" fill="#fdfdfd" stroke="#fdfdfd" stroke-width="6.4" /><rect x="894.45" y="550.60" width="33.90" height="26.00" fill="#fafafa" stroke="#3b3a39" stroke-width="1.9" /><path d="M903.4 560.5500000000001 H919.6 M903.4 566.15 H919.6" fill="none" stroke="#3b3a39" stroke-width="1.7" stroke-linejoin="miter"/><rect x="870.50" y="617.35" width="53.85" height="42.05" fill="#fafafa"/><line x1="884.35" y1="617.35" x2="884.35" y2="659.40" stroke="#706e6b" stroke-width="1.5"/><line x1="910.35" y1="617.35" x2="910.35" y2="659.40" stroke="#706e6b" stroke-width="1.5"/><line x1="870.50" y1="631.70" x2="924.35" y2="631.70" stroke="#706e6b" stroke-width="1.5"/><line x1="870.50" y1="645.70" x2="924.35" y2="645.70" stroke="#706e6b" stroke-width="1.5"/><rect x="870.50" y="617.35" width="53.85" height="42.05" fill="none" stroke="#3b3a39" stroke-width="1.9"/><rect x="884.35" y="631.70" width="26.00" height="14.00" fill="#f8dc8f" stroke="#e07000" stroke-width="2.0" /><rect x="894.45" y="643.60" width="33.90" height="26.00" fill="#fdfdfd" stroke="#fdfdfd" stroke-width="6.4" /><rect x="894.45" y="643.60" width="33.90" height="26.00" fill="#fafafa" stroke="#3b3a39" stroke-width="1.9" /><rect x="870.50" y="710.35" width="53.85" height="42.05" fill="#fafafa"/><line x1="884.35" y1="710.35" x2="884.35" y2="752.40" stroke="#706e6b" stroke-width="1.5"/><line x1="910.35" y1="710.35" x2="910.35" y2="752.40" stroke="#706e6b" stroke-width="1.5"/><line x1="870.50" y1="724.70" x2="924.35" y2="724.70" stroke="#706e6b" stroke-width="1.5"/><line x1="870.50" y1="738.70" x2="924.35" y2="738.70" stroke="#706e6b" stroke-width="1.5"/><rect x="870.50" y="710.35" width="53.85" height="42.05" fill="none" stroke="#3b3a39" stroke-width="1.9"/><rect x="884.35" y="724.70" width="26.00" height="14.00" fill="#f8dc8f" stroke="#e07000" stroke-width="2.0" /><rect x="900.70" y="735.35" width="27.60" height="26.30" fill="#fdfdfd" stroke="#fdfdfd" stroke-width="6.4" /><rect x="900.70" y="735.35" width="27.60" height="26.30" fill="#fafafa" stroke="#3b3a39" stroke-width="1.9" /><line x1="900.70" y1="741.55" x2="928.30" y2="741.55" stroke="#3b3a39" stroke-width="1.6" /><line x1="906.30" y1="732.55" x2="906.30" y2="738.75" stroke="#3b3a39" stroke-width="1.7" /><line x1="922.50" y1="732.55" x2="922.50" y2="738.75" stroke="#3b3a39" stroke-width="1.7" /><rect x="870.50" y="803.35" width="53.85" height="42.05" fill="#fafafa"/><line x1="884.35" y1="803.35" x2="884.35" y2="845.40" stroke="#706e6b" stroke-width="1.5"/><line x1="910.35" y1="803.35" x2="910.35" y2="845.40" stroke="#706e6b" stroke-width="1.5"/><line x1="870.50" y1="817.70" x2="924.35" y2="817.70" stroke="#706e6b" stroke-width="1.5"/><line x1="870.50" y1="831.70" x2="924.35" y2="831.70" stroke="#706e6b" stroke-width="1.5"/><rect x="870.50" y="803.35" width="53.85" height="42.05" fill="none" stroke="#3b3a39" stroke-width="1.9"/><rect x="884.35" y="803.35" width="26.00" height="14.35" fill="#f8dc8f" stroke="#e07000" stroke-width="2.0" /><rect x="884.35" y="831.70" width="26.00" height="13.70" fill="#f8dc8f" stroke="#e07000" stroke-width="2.0" /></svg>
<span class="t" style="left:904.21px;top:639.30px;font-size:28.84px;transform:scaleX(0.8100);color:#5a5a5a;">a</span>
<span class="t" style="left:515.72px;top:256.67px;font-size:26.16px;transform:scaleX(1.0161);color:#1f1f1f;font-weight:700;"><u>H</u>ighlight Cells Rules</span>
<span class="t" style="left:516.44px;top:349.92px;font-size:26.16px;transform:scaleX(1.0462);color:#1f1f1f;font-weight:700;"><u>T</u>op/Bottom Rules</span>
<span class="t" style="left:515.73px;top:449.17px;font-size:26.16px;transform:scaleX(1.0115);color:#1f1f1f;font-weight:700;"><u>D</u>ata Bars</span>
<span class="t" style="left:515.70px;top:542.17px;font-size:26.16px;transform:scaleX(0.9818);color:#1f1f1f;font-weight:700;">Color <u>S</u>cales</span>
<span class="t" style="left:515.76px;top:634.92px;font-size:26.16px;transform:scaleX(0.9957);color:#1f1f1f;font-weight:700;"><u>I</u>con Sets</span>
<span class="t" style="left:487.59px;top:713.56px;font-size:25.87px;transform:scaleX(0.9935);color:#1f1f1f;"><u>N</u>ew Rule...</span>
<span class="t" style="left:488.22px;top:779.46px;font-size:25.87px;transform:scaleX(0.9743);color:#1f1f1f;"><u>C</u>lear Rules</span>
<span class="t" style="left:488.91px;top:845.66px;font-size:25.87px;transform:scaleX(0.9858);color:#1f1f1f;">Manage <u>R</u>ules...</span>
<span class="t" style="left:942.90px;top:260.92px;font-size:26.16px;transform:scaleX(1.0246);color:#1f1f1f;font-weight:700;"><u>G</u>reater Than...</span>
<span class="t" style="left:943.07px;top:354.17px;font-size:26.16px;transform:scaleX(0.9600);color:#1f1f1f;font-weight:700;"><u>L</u>ess Than...</span>
<span class="t" style="left:942.95px;top:447.17px;font-size:26.16px;transform:scaleX(1.0270);color:#1f1f1f;font-weight:700;"><u>B</u>etween...</span>
<span class="t" style="left:943.00px;top:539.92px;font-size:26.16px;transform:scaleX(0.9983);color:#1f1f1f;font-weight:700;"><u>E</u>qual To...</span>
<span class="t" style="left:943.70px;top:632.92px;font-size:26.16px;transform:scaleX(1.0285);color:#1f1f1f;font-weight:700;"><u>T</u>ext that Contains...</span>
<span class="t" style="left:943.34px;top:725.92px;font-size:26.16px;transform:scaleX(1.0159);color:#1f1f1f;font-weight:700;"><u>A</u> Date Occurring...</span>
<span class="t" style="left:942.96px;top:818.67px;font-size:26.16px;transform:scaleX(1.0214);color:#1f1f1f;font-weight:700;"><u>D</u>uplicate Values...</span>
<span class="t" style="left:915.64px;top:897.63px;font-size:26.74px;transform:scaleX(0.9634);color:#1f1f1f;"><u>M</u>ore Rules...</span>
</div></body></html>
